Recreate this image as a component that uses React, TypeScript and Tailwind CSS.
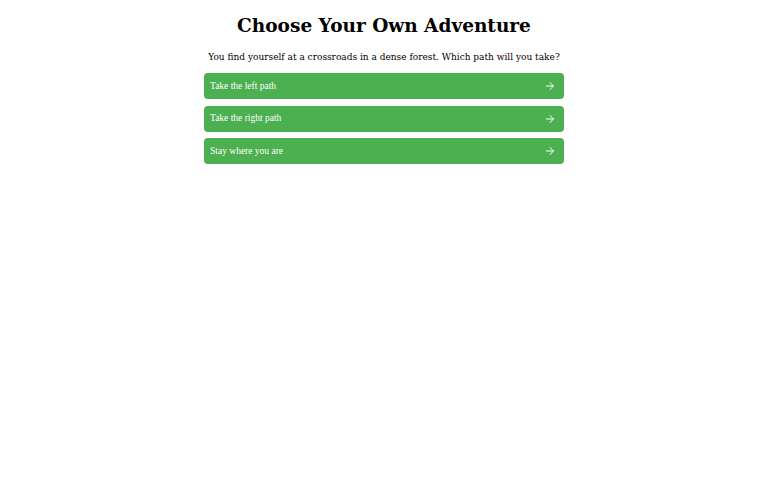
import React from 'react';
import { ArrowRight } from 'lucide-react';

const choices = ['Take the left path', 'Take the right path', 'Stay where you are'];

function App() {
  return (
    <div className="min-h-screen bg-white">
      <div className="mx-auto max-w-[360px] pt-[14px]">
        <h1 className="text-center text-[18.5px] font-bold leading-[24px] text-black [font-family:'DejaVu_Serif',serif]">
          Choose Your Own Adventure
        </h1>
        <p className="mt-[12px] whitespace-nowrap text-center text-[9px] leading-[14px] text-black [font-family:'DejaVu_Serif',serif]">
          You find yourself at a crossroads in a dense forest. Which path will you take?
        </p>
        <div className="mt-[9px] flex flex-col gap-[6.5px]">
          {choices.map((c) => (
            <button
              key={c}
              className="flex h-[26px] items-center justify-between rounded-[4px] bg-[#4caf50] px-[6px] text-left text-[9.5px] text-white [font-family:'Liberation_Serif',serif]"
            >
              <span>{c}</span>
              <ArrowRight className="mr-[2px] h-[12px] w-[12px]" strokeWidth={2} />
            </button>
          ))}
        </div>
      </div>
    </div>
  );
}

export default App;
